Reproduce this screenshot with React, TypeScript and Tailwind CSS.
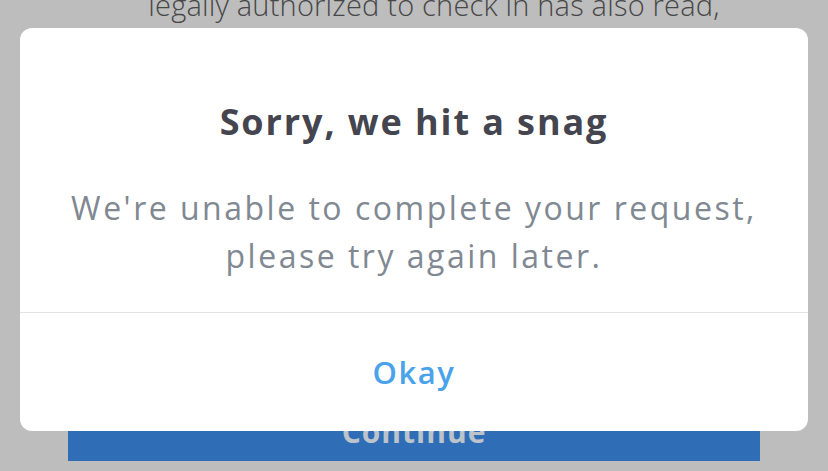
import React from "react";

export default function App() {
  const font = { fontFamily: "'Open Sans', Lato, sans-serif" };
  return (
    <div className="relative w-[828px] h-[471px] overflow-hidden bg-[#bdbdbd]" style={font}>
      {/* underlying page (dimmed) */}
      <div className="flex flex-col items-center h-full">
        <div className="mt-[-15px] pl-[40px] h-[40px] leading-[40px] text-[29px] font-light tracking-[0.2px] text-[#474747] whitespace-nowrap">
          legally authorized to check in has also read,
        </div>
        <div className="flex-1" />
        <div className="mb-[10px] w-[692px] h-[60px] bg-[#2f6eb7] flex items-center justify-center text-[30px] font-bold tracking-[1px] text-[#bcc3cb]">
          Continue
        </div>
      </div>

      {/* modal */}
      <div className="absolute left-[20px] top-[28px] w-[788px] h-[403px] bg-white rounded-[12px] flex flex-col">
        <div className="h-[284px] flex flex-col items-center pt-[70px]">
          <div className="text-[36px] leading-[48px] font-bold tracking-[1.9px] text-[#45454f]">Sorry, we hit a snag</div>
          <div className="mt-[38px] text-[32px] leading-[48px] tracking-[2.5px] text-[#808892] text-center">
            We're unable to complete your request,
            <br />
            please try again later.
          </div>
        </div>
        <div className="h-[1px] bg-[#e3e3e3]" />
        <div className="flex-1 flex items-center justify-center text-[31px] font-semibold tracking-[1.6px] text-[#4aa3ea]">
          Okay
        </div>
      </div>
    </div>
  );
}
